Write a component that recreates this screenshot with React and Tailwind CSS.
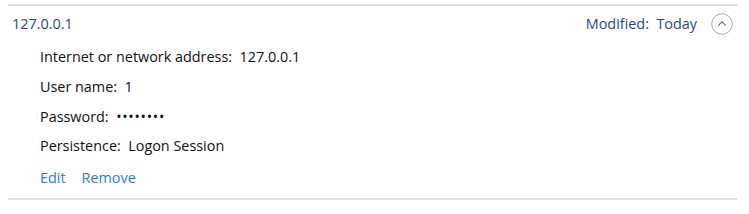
export default function App() {
  return (
    <div className="w-[749px] h-[214px] bg-white pt-[4px] px-[8px] font-['Open_Sans',sans-serif] text-[14.4px]">
      <div className="border-t-2 border-b-2 border-[#dfdfdf] w-[729px]">
        <div className="flex items-center justify-between h-[36px] pl-[4px] pr-[4px]">
          <span className="text-[#2c4787]">127.0.0.1</span>
          <div className="flex items-center gap-[14px]">
            <span className="text-[#2c4787]">Modified:&nbsp; Today</span>
            <svg width="22" height="22" viewBox="0 0 22 22" className="block">
              <circle cx="11" cy="11" r="10.3" fill="none" stroke="#a8a8a8" strokeWidth="1" />
              <path d="M7.2 12.6 L11 8.8 L14.8 12.6" fill="none" stroke="#6a6a6a" strokeWidth="1.1" />
            </svg>
          </div>
        </div>
        <div className="pl-[32px] text-[#111111]">
          <div className="h-[30px] flex items-center">Internet or network address:&nbsp; 127.0.0.1</div>
          <div className="h-[30px] flex items-center">User name:&nbsp; 1</div>
          <div className="h-[29px] flex items-center">
            <span>Password:&nbsp; <span className="tracking-[0.7px]">••••••••</span></span>
          </div>
          <div className="h-[29px] flex items-center">Persistence:&nbsp; Logon Session</div>
          <div className="h-[38px] flex items-center gap-[16px] text-[#2f7bd0] pb-[2px]">
            <span>Edit</span>
            <span>Remove</span>
          </div>
        </div>
      </div>
    </div>
  );
}
